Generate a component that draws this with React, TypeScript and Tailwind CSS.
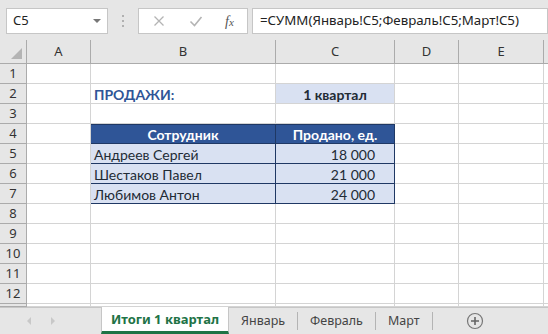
import React from 'react'

const COLS = [
  { key: 'A', w: 'w-[64px]' },
  { key: 'B', w: 'w-[185px]' },
  { key: 'C', w: 'w-[119px]' },
  { key: 'D', w: 'w-[64px]' },
  { key: 'E', w: 'w-[85px]' },
]

const ui = { fontFamily: '"Noto Sans", "Open Sans", sans-serif' }
const cell = { fontFamily: 'Lato, "Liberation Sans", sans-serif' }

type Cell = { text?: string; cls?: string }

/** sheet content keyed by row, then column letter */
const DATA: Record<number, Record<string, Cell>> = {
  2: {
    B: { text: 'ПРОДАЖИ:', cls: 'font-bold text-[#2f5597] pl-[3px]' },
    C: { text: '1 квартал', cls: 'bg-[#d9e1f2] font-bold text-[#222b35] justify-center' },
  },
  4: {
    B: { text: 'Сотрудник', cls: 'bg-[#2f5597] text-white font-bold justify-center !border-[#1f3864] border-t' },
    C: { text: 'Продано, ед.', cls: 'bg-[#2f5597] text-white font-bold justify-center !border-[#1f3864] border-t' },
  },
  5: {
    B: { text: 'Андреев Сергей', cls: 'bg-[#d9e1f2] text-[#222b35] pl-[3px] !border-[#1f3864]' },
    C: { text: '18 000', cls: 'bg-[#d9e1f2] text-[#222b35] justify-end pr-[19px] !border-[#1f3864]' },
  },
  6: {
    B: { text: 'Шестаков Павел', cls: 'bg-[#d9e1f2] text-[#222b35] pl-[3px] !border-[#1f3864]' },
    C: { text: '21 000', cls: 'bg-[#d9e1f2] text-[#222b35] justify-end pr-[19px] !border-[#1f3864]' },
  },
  7: {
    B: { text: 'Любимов Антон', cls: 'bg-[#d9e1f2] text-[#222b35] pl-[3px] !border-[#1f3864]' },
    C: { text: '24 000', cls: 'bg-[#d9e1f2] text-[#222b35] justify-end pr-[19px] !border-[#1f3864]' },
  },
}

function FormulaBar() {
  return (
    <div className="flex h-[40px] items-start bg-[#e6e6e6] pt-[8px]" style={ui}>
      <div className="ml-[6px] flex h-[26px] w-[102px] items-center justify-between border border-[#c6c6c6] bg-white pl-[6px] pr-[6px] text-[13px] text-[#222]">
        <span>C5</span>
        <span className="h-0 w-0 border-x-[4px] border-t-[4px] border-x-transparent border-t-[#777]" />
      </div>
      <div className="flex w-[30px] flex-col items-center gap-[3px] pt-[7px]">
        <span className="h-[2px] w-[2px] bg-[#b0b0b0]" />
        <span className="h-[2px] w-[2px] bg-[#b0b0b0]" />
        <span className="h-[2px] w-[2px] bg-[#b0b0b0]" />
      </div>
      <div className="flex h-[26px] w-[110px] items-center border border-[#c6c6c6] bg-white">
        <svg width="12" height="12" viewBox="0 0 12 12" className="ml-[14px]">
          <path d="M1.5 1.5l9 9M10.5 1.5l-9 9" stroke="#b4b4b4" strokeWidth="1.3" />
        </svg>
        <svg width="14" height="12" viewBox="0 0 14 12" className="ml-[24px]">
          <path d="M1.5 6.5l4 4 7-8.5" stroke="#b4b4b4" strokeWidth="1.6" fill="none" />
        </svg>
        <span
          className="ml-[22px] text-[14px] italic text-[#555]"
          style={{ fontFamily: '"Liberation Serif", serif' }}
        >
          f<span className="text-[11px]">x</span>
        </span>
      </div>
      <div className="ml-[4px] flex h-[26px] flex-1 items-center border border-[#c6c6c6] bg-white pl-[7px] text-[13.3px] text-[#222]">
        =СУММ(Январь!C5;Февраль!C5;Март!C5)
      </div>
    </div>
  )
}

function ColumnHeaders() {
  return (
    <div className="flex h-[24px] border-b border-[#ababab] bg-[#e6e6e6] text-[13px] text-[#333]" style={ui}>
      <div className="relative w-[27px] shrink-0 border-r border-[#ababab]">
        <span className="absolute bottom-[4px] right-[4px] h-0 w-0 border-b-[11px] border-l-[11px] border-b-[#b4b4b4] border-l-transparent" />
      </div>
      {COLS.map((c) => (
        <div key={c.key} className={`${c.w} flex shrink-0 items-center justify-center border-r border-[#ababab]`}>
          {c.key}
        </div>
      ))}
      <div className="flex-1" />
    </div>
  )
}

function Row({ n, h = 'h-[20px]' }: { n: number; h?: string }) {
  const row = DATA[n] ?? {}
  return (
    <div className={`flex ${h} shrink-0`}>
      <div
        className="flex w-[27px] shrink-0 items-center justify-center border-r border-b border-[#ababab] bg-[#e6e6e6] text-[13px] text-[#333]"
        style={ui}
      >
        {n <= 12 ? n : ''}
      </div>
      {COLS.map((c) => {
        const d = row[c.key]
        return (
          <div
            key={c.key}
            className={`${c.w} flex shrink-0 items-center border-r border-b border-[#d4d4d4] pt-[2px] text-[14px] leading-none ${d?.cls ?? ''}`}
            style={cell}
          >
            {d?.text}
          </div>
        )
      })}
      <div className="flex-1 border-b border-[#d4d4d4]" />
    </div>
  )
}

function SheetTabs() {
  return (
    <div className="flex h-[27px] items-stretch border-t border-[#c6c6c6] bg-[#e6e6e6] text-[12.5px] text-[#444]" style={ui}>
      <div className="flex w-[101px] items-center gap-[20px] pl-[27px]">
        <span className="h-0 w-0 border-y-[4px] border-r-[4px] border-y-transparent border-r-[#c8c8c8]" />
        <span className="h-0 w-0 border-y-[4px] border-l-[4px] border-y-transparent border-l-[#c8c8c8]" />
      </div>
      <div className="-mt-px flex w-[128px] items-center justify-center border-x border-[#c6c6c6] border-b-[3px] border-b-[#217346] bg-white pt-px text-[13px] font-bold text-[#217346]">
        Итоги 1 квартал
      </div>
      <div className="flex items-center">
        <span className="px-[12px]">Январь</span>
        <span className="h-[18px] w-px bg-[#b4b4b4]" />
        <span className="px-[12px]">Февраль</span>
        <span className="h-[18px] w-px bg-[#b4b4b4]" />
        <span className="px-[12px]">Март</span>
        <span className="h-[18px] w-px bg-[#b4b4b4]" />
        <svg width="18" height="18" viewBox="0 0 18 18" className="ml-[33px]">
          <circle cx="9" cy="9" r="7.5" fill="none" stroke="#777" strokeWidth="1.2" />
          <path d="M9 5v8M5 9h8" stroke="#666" strokeWidth="1.6" />
        </svg>
      </div>
    </div>
  )
}

export default function App() {
  return (
    <div className="flex h-[334px] w-[548px] flex-col overflow-hidden bg-white">
      <FormulaBar />
      <ColumnHeaders />
      {Array.from({ length: 12 }, (_, i) => (
        <Row key={i} n={i + 1} />
      ))}
      <Row n={13} h="h-[3px] overflow-hidden" />
      <SheetTabs />
    </div>
  )
}
